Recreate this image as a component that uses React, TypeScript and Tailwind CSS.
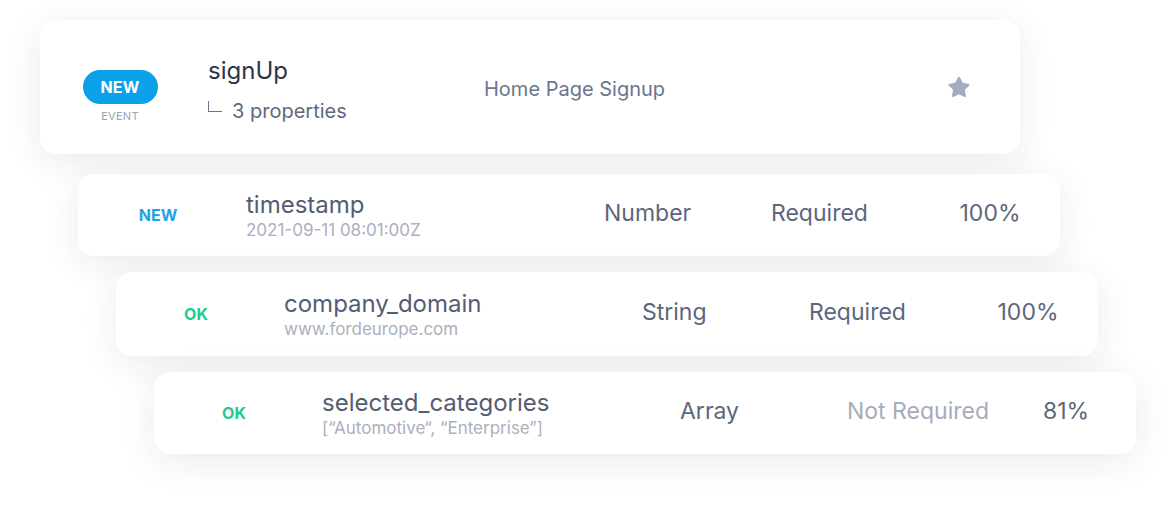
const font = { fontFamily: 'Inter, "Noto Sans", sans-serif' }

type Prop = {
  status: 'NEW' | 'OK'
  name: string
  sample: string
  type: string
  required: boolean
  pct: string
}

const props: Prop[] = [
  { status: 'NEW', name: 'timestamp', sample: '2021-09-11 08:01:00Z', type: 'Number', required: true, pct: '100%' },
  { status: 'OK', name: 'company_domain', sample: 'www.fordeurope.com', type: 'String', required: true, pct: '100%' },
  { status: 'OK', name: 'selected_categories', sample: '[“Automotive“, “Enterprise”]', type: 'Array', required: false, pct: '81%' },
]

const offsets = ['ml-[38px] mt-[20px] h-[82px]', 'ml-[76px] mt-[16px] h-[84px]', 'ml-[114px] mt-[16px] h-[82px]']

function Star() {
  return (
    <svg width="26" height="26" viewBox="0 0 24 24" fill="#a3acc2">
      <path
        d="M12 2.6c.4 0 .8.2 1 .6l2.4 4.9 5.3.8c.9.1 1.3 1.2.6 1.9l-3.9 3.8.9 5.4c.2.9-.8 1.6-1.6 1.1L12 18.6l-4.8 2.5c-.8.4-1.8-.2-1.6-1.1l.9-5.4-3.9-3.8c-.7-.6-.3-1.8.6-1.9l5.3-.8L10.9 3.2c.3-.4.7-.6 1.1-.6z"
        strokeLinejoin="round"
      />
    </svg>
  )
}

export default function App() {
  return (
    <div className="w-[1176px] h-[514px] bg-white overflow-hidden pl-[40px] pt-[20px]" style={font}>
      {/* event card */}
      <div className="w-[980px] h-[134px] bg-white rounded-[16px] shadow-[0_8px_36px_rgba(20,30,60,0.09)] flex items-center">
        <div className="w-[160px] flex flex-col items-center pt-[20px]">
          <div className="w-[75px] h-[34px] rounded-full bg-[#0ba1e8] flex items-center justify-center text-white text-[16px] font-bold tracking-[0.2px]">
            NEW
          </div>
          <div className="mt-[4px] text-[11px] text-[#9aa2b3] tracking-[0.3px]">EVENT</div>
        </div>
        <div className="w-[284px] pl-[8px] mt-[4px]">
          <div className="text-[24px] leading-[30px] text-[#2d3448]">signUp</div>
          <div className="flex items-center mt-[14px] text-[20px] leading-[22px] text-[#5f6980]">
            <span className="w-[14px] h-[11px] border-l-[1.5px] border-b-[1.5px] border-[#6b7489] mr-[10px] -mt-[10px]" />
            3 properties
          </div>
        </div>
        <div className="w-[462px] text-[20px] text-[#6b7590] mt-[4px]">Home Page Signup</div>
        <Star />
      </div>

      {props.map((p, i) => (
        <div
          key={p.name}
          className={`${offsets[i]} w-[982px] bg-white rounded-[16px] shadow-[0_8px_36px_rgba(20,30,60,0.09)] grid grid-cols-[160px_366px_167px_169px_100px] items-center`}
        >
          <div
            className={`text-center text-[16px] font-bold ${p.status === 'NEW' ? 'text-[#1ea3e3]' : 'text-[#1bcb90]'}`}
          >
            {p.status}
          </div>
          <div className="pl-[8px] mt-[2px]">
            <div className="text-[24px] leading-[28px] text-[#545d73]">{p.name}</div>
            <div className="text-[17px] leading-[22px] text-[#abb0bd]">{p.sample}</div>
          </div>
          <div className="text-[23px] text-[#5d667c] -mt-[3px]">{p.type}</div>
          <div className={`text-[23px] -mt-[3px] ${p.required ? 'text-[#5d667c]' : 'text-[#a6acbb]'}`}>
            {p.required ? 'Required' : 'Not Required'}
          </div>
          <div className="text-center text-[23px] text-[#5d667c] -mt-[3px]">{p.pct}</div>
        </div>
      ))}
    </div>
  )
}
